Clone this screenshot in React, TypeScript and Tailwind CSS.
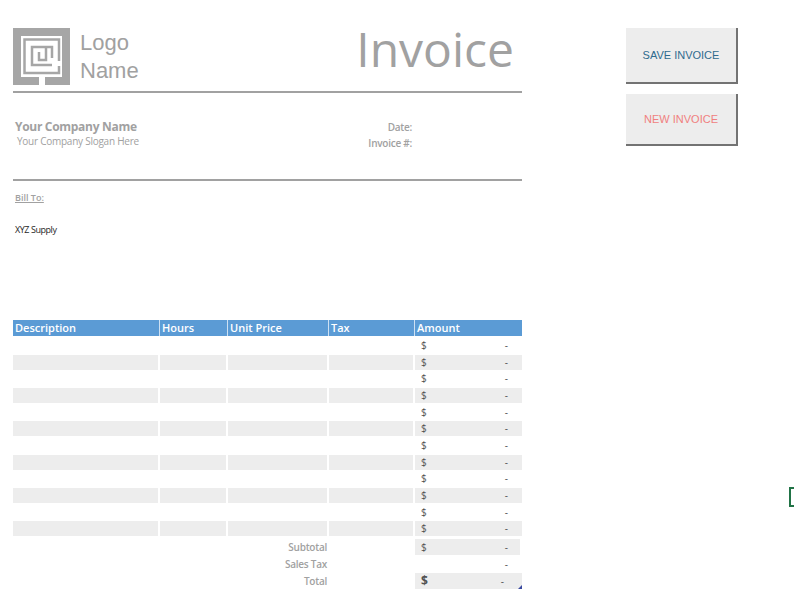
import React from 'react';

const sans = 'font-["Open_Sans",sans-serif]';
const rowCols = 'grid grid-cols-[147px_68px_101px_86px_107px]';
const rows = Array.from({ length: 12 }, (_, i) => i);

function Logo() {
  return (
    <svg viewBox="0 0 57 57" className="h-[57px] w-[57px] shrink-0" aria-label="Logo">
      <rect width="57" height="57" fill="#a6a6a6" />
      <rect x="8" y="8" width="41" height="41" fill="#fff" />
      <rect x="26" y="48" width="6" height="9" fill="#fff" />
      <g fill="none" stroke="#a6a6a6" strokeWidth="2.5">
        <path d="M46 33V11.5H11.5V45H46V38" />
        <path d="M39 37H19V19H39V30" />
        <path d="M26 24V32H33V19" />
      </g>
    </svg>
  );
}

function Totals({ label, gray, bold }: { label: string; gray?: boolean; bold?: boolean }) {
  return (
    <div className={`${rowCols} h-4 items-center text-[10px]`}>
      <div />
      <div />
      <div className="pr-0.5 text-right font-semibold tracking-tight text-neutral-400">{label}</div>
      <div />
      <div className={`flex h-4 items-center justify-between pl-1.5 ${bold ? 'pr-4.5' : 'mr-0.5 pr-3'} ${gray ? 'bg-neutral-200/70' : ''}`}>
        <span className={bold ? 'text-xs font-bold text-neutral-600' : 'text-neutral-600'}>{gray ? '$' : ''}</span>
        <span className="text-neutral-600">-</span>
      </div>
    </div>
  );
}

export default function App() {
  return (
    <div className={`relative flex h-[607px] w-[794px] overflow-hidden bg-white pl-px ${sans}`}>
      <div className="ml-3 flex w-[509px] flex-col pt-7">
        <div className="flex h-[57px] items-center">
          <Logo />
          <div className="ml-2.5 font-['Liberation_Sans',sans-serif] text-[22px] leading-7 text-neutral-400">
            <div>Logo</div>
            <div>Name</div>
          </div>
          <div className="mb-4 ml-auto mr-2 text-5xl text-neutral-400">Invoice</div>
        </div>
        <div className="mt-1.5 h-0.5 bg-neutral-400" />

        <div className="mt-6 flex h-16 border-b-2 border-neutral-400 pt-0.5 text-neutral-400">
          <div className="pl-0.5">
            <div className="text-xs font-bold tracking-tight">Your Company Name</div>
            <div className="pl-0.5 text-[10px] leading-3 tracking-tight">Your Company Slogan Here</div>
          </div>
          <div className="ml-auto mr-[110px] text-right text-[10px] font-semibold leading-4 tracking-tight">
            <div>Date:</div>
            <div>Invoice #:</div>
          </div>
        </div>

        <div className="mt-2.5 pl-0.5 text-[9px] font-semibold text-neutral-400 underline">Bill To:</div>
        <div className="mt-4.5 pl-0.5 text-[9px] tracking-tighter text-neutral-800">XYZ Supply</div>

        <div className={`${rowCols} mt-21 h-4 items-center bg-[#5b9bd5] text-[11px] font-semibold text-white`}>
          {['Description', 'Hours', 'Unit Price', 'Tax', 'Amount'].map((h) => (
            <div key={h} className="flex h-4 items-center border-r border-white/70 pl-0.5 last:border-r-0">
              {h}
            </div>
          ))}
        </div>

        <div className="mt-px grid h-50 grid-rows-12 text-[10px] text-neutral-600">
          {rows.map((i) => {
            const fill = i % 2 === 1 ? 'bg-neutral-200/70' : '';
            return (
              <div key={i} className={`${rowCols} py-px`}>
                <div className={`mr-0.5 ${fill}`} />
                <div className={`mr-0.5 ${fill}`} />
                <div className={`mr-0.5 ${fill}`} />
                <div className={`mr-0.5 ${fill}`} />
                <div className={`flex items-center justify-between pl-1.5 pr-3.5 ${fill}`}>
                  <span>$</span>
                  <span>-</span>
                </div>
              </div>
            );
          })}
        </div>

        <div className="mt-0.5 flex flex-col gap-px">
          <Totals label="Subtotal" gray />
          <Totals label="Sales Tax" />
          <div className="relative">
            <Totals label="Total" gray bold />
            <svg viewBox="0 0 4 4" className="absolute bottom-0 right-0 h-1 w-1" fill="#3b4aa0">
              <path d="M4 0V4H0Z" />
            </svg>
          </div>
        </div>
      </div>

      <div className="ml-[104px] flex w-28 flex-col gap-2.5 pt-7 font-['Liberation_Sans',sans-serif] text-[11px]">
        <button className="h-14 border-b-2 border-r-2 border-neutral-500 bg-neutral-200/70 text-[#2f6b8e]">SAVE INVOICE</button>
        <button className="h-13 border-b-2 border-r-2 border-neutral-500 bg-neutral-200/70 text-[#f08080]">NEW INVOICE</button>
      </div>

      <div className="absolute left-[789px] top-[487px] h-5 w-3 border-2 border-[#217346]" />
    </div>
  );
}
